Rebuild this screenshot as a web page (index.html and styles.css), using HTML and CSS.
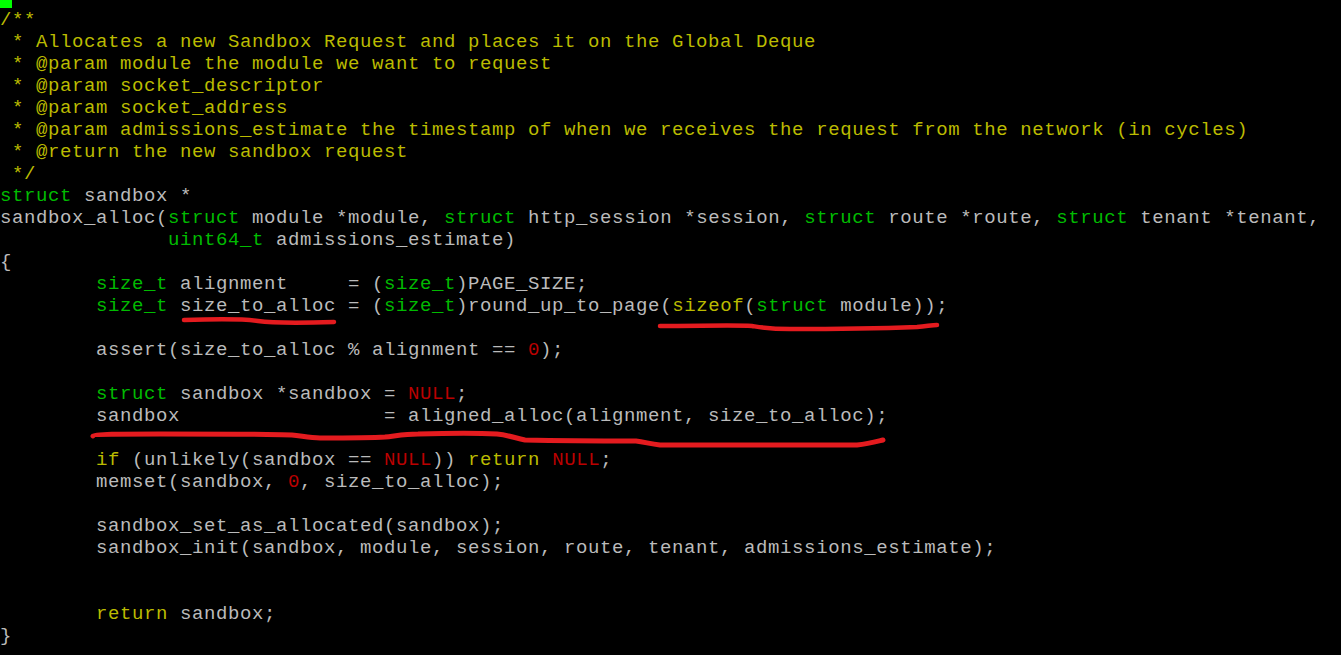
FILE: index.html
```html
<!DOCTYPE html>
<html lang="en">
<head>
<meta charset="utf-8">
<title>sandbox_alloc</title>
<link rel="stylesheet" href="styles.css">
</head>
<body>
<div class="term">
  <div class="cursor-row"><span class="cursor"></span></div>
<pre class="code"><span class="c">/**
 * Allocates a new Sandbox Request and places it on the Global Deque
 * @param module the module we want to request
 * @param socket_descriptor
 * @param socket_address
 * @param admissions_estimate the timestamp of when we receives the request from the network (in cycles)
 * @return the new sandbox request
 */</span>
<span class="t">struct</span> sandbox *
sandbox_alloc(<span class="t">struct</span> module *module, <span class="t">struct</span> http_session *session, <span class="t">struct</span> route *route, <span class="t">struct</span> tenant *tenant,
              <span class="t">uint64_t</span> admissions_estimate)
{
        <span class="t">size_t</span> alignment     = (<span class="t">size_t</span>)PAGE_SIZE;
        <span class="t">size_t</span> size_to_alloc = (<span class="t">size_t</span>)round_up_to_page(<span class="k">sizeof</span>(<span class="t">struct</span> module));

        assert(size_to_alloc % alignment == <span class="n">0</span>);

        <span class="t">struct</span> sandbox *sandbox = <span class="n">NULL</span>;
        sandbox                 = aligned_alloc(alignment, size_to_alloc);

        <span class="k">if</span> (unlikely(sandbox == <span class="n">NULL</span>)) <span class="k">return</span> <span class="n">NULL</span>;
        memset(sandbox, <span class="n">0</span>, size_to_alloc);

        sandbox_set_as_allocated(sandbox);
        sandbox_init(sandbox, module, session, route, tenant, admissions_estimate);


        <span class="k">return</span> sandbox;
}</pre>
  <svg class="marks" width="1341" height="655" viewBox="0 0 1341 655" aria-hidden="true">
    <path d="M184,320 C215,319 245,319 258,321 C272,323 300,323 334,322" />
    <path d="M660,326 C700,326 735,325 752,326 C765,328 770,329 790,329 C840,329 890,328 917,327 C928,326 932,325 937,325" />
    <path class="thick" d="M93,436 C94,434 120,434 160,434 C220,434 270,434 292,435 C302,436 310,438 320,438 C345,438 370,438 385,437 C395,436 405,434 418,434 C450,433 480,433 497,434 C508,435 515,438 525,440 C570,441 610,441 636,441 C645,442 650,444 660,445 C730,445 800,445 857,445 C868,444 875,442 883,440" />
  </svg>
</div>
</body>
</html>
```

FILE: styles.css
```css
html, body {
  margin: 0;
  padding: 0;
  background: #000;
}

.term {
  position: relative;
  width: 1341px;
  height: 655px;
  overflow: hidden;
  background: #000;
}

.cursor-row {
  height: 8px;
  display: flex;
}

.cursor {
  width: 12px;
  height: 8px;
  background: #00ff00;
}

.code {
  margin: 0;
  padding-top: 1px;
  font-family: "Liberation Mono", "Courier New", monospace;
  font-size: 19px;
  letter-spacing: 0.6px;
  line-height: 22px;
  color: #bbbbbb;
  white-space: pre;
}

.c { color: #bbbb00; }
.k { color: #bbbb00; }
.t { color: #00bb00; }
.n { color: #bb0000; }

.marks {
  position: absolute;
  left: 0;
  top: 0;
  pointer-events: none;
}

.marks path {
  fill: none;
  stroke: #e41b1f;
  stroke-width: 4.5;
  stroke-linecap: round;
  stroke-linejoin: round;
}

.marks .thick {
  stroke-width: 5;
}
```
